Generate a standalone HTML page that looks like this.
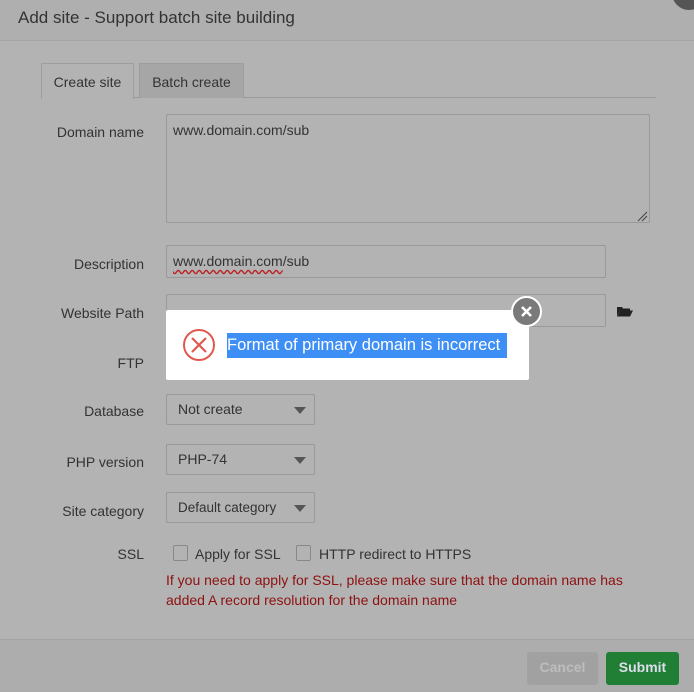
<!DOCTYPE html>
<html><head><meta charset="utf-8"><style>
*{box-sizing:border-box;margin:0;padding:0}
body{width:694px;height:692px;overflow:hidden;background:#b3b3b3;font-family:"Liberation Sans",sans-serif;color:#2a2a2a;position:relative}
.a{position:absolute}
.hdr{left:0;top:0;width:694px;height:41px;background:#afafaf;border-bottom:1px solid #a6a6a6}
.ttl{left:18px;top:8px;font-size:17px;color:#333}
.lbl{font-size:14px;color:#333;text-align:right;width:144px;left:0}
.inp{border:1px solid #999;border-radius:2px;font-size:14px;color:#333;padding-left:6px}
.sel{border:1px solid #999;border-radius:2px;font-size:14px;color:#333;padding-left:11px;line-height:29px;height:31px;width:149px;left:166px}
.sel:after{content:"";position:absolute;right:8px;top:12px;border-left:6px solid transparent;border-right:6px solid transparent;border-top:7px solid #555}
.cb{width:15px;height:16px;border:1px solid #888;border-radius:2px;top:545px}
.tab{font-size:14px;height:35px;line-height:36px;text-align:center;border:1px solid #9e9e9e;border-bottom:none}
</style></head><body>
<div class="a hdr"></div>
<div class="a ttl">Add site - Support batch site building</div>
<div class="a" style="left:672px;top:-24px;width:34px;height:34px;border-radius:50%;background:#555"></div>
<div class="a" style="left:41px;top:97px;width:615px;border-top:1px solid #999"></div>
<div class="a tab" style="left:41px;top:63px;width:93px;background:#b3b3b3;height:36px;color:#333">Create site</div>
<div class="a tab" style="left:139px;top:63px;width:105px;background:#a6a6a6;color:#333">Batch create</div>

<div class="a lbl" style="top:124px">Domain name</div>
<div class="a inp" style="left:166px;top:114px;width:484px;height:109px;padding-top:7px">www.domain.com/sub</div>
<svg class="a" style="left:636px;top:210px" width="12" height="12"><path d="M2 11L11 2M6 11L11 6" stroke="#444" stroke-width="1"/></svg>

<div class="a lbl" style="top:256px">Description</div>
<div class="a inp" style="left:166px;top:245px;width:440px;height:33px;line-height:31px"><span style="text-decoration:underline wavy #b22;text-underline-offset:3px">www.domain.com</span>/sub</div>

<div class="a lbl" style="top:305px">Website Path</div>
<div class="a inp" style="left:166px;top:294px;width:440px;height:33px"></div>
<svg class="a" style="left:616px;top:304px" width="18" height="14"><path d="M1 3h5l1 1.5h7v2H4L1 12z" fill="#222"/><path d="M4 6.5h13l-3 6H1z" fill="#222"/></svg>

<div class="a lbl" style="top:355px">FTP</div>

<div class="a lbl" style="top:403px">Database</div>
<div class="a sel" style="top:394px">Not create</div>
<div class="a lbl" style="top:454px">PHP version</div>
<div class="a sel" style="top:444px">PHP-74</div>
<div class="a lbl" style="top:503px">Site category</div>
<div class="a sel" style="top:492px;padding-left:11px;font-size:13.5px;white-space:nowrap">Default category</div>

<div class="a lbl" style="top:546px">SSL</div>
<div class="a cb" style="left:173px"></div>
<div class="a" style="left:195px;top:546px;font-size:14px;color:#333">Apply for SSL</div>
<div class="a cb" style="left:296px"></div>
<div class="a" style="left:319px;top:546px;font-size:14px;color:#333">HTTP redirect to HTTPS</div>
<div class="a" style="left:166px;top:570px;font-size:14px;color:#8e1010;line-height:20px;width:470px">If you need to apply for SSL, please make sure that the domain name has added A record resolution for the domain name</div>

<div class="a" style="left:0;top:639px;width:694px;height:53px;background:#acadac;border-top:1px solid #a3a3a3"></div>
<div class="a" style="left:527px;top:652px;width:71px;height:33px;background:#a1a1a1;border-radius:3px;color:#bdbdbd;font-size:14px;font-weight:bold;text-align:center;line-height:31px">Cancel</div>
<div class="a" style="left:606px;top:652px;width:73px;height:33px;background:#217f35;border-radius:3px;color:#dde;font-size:14px;font-weight:bold;text-align:center;line-height:31px">Submit</div>

<div class="a" style="left:166px;top:310px;width:363px;height:70px;background:#fff;border-radius:2px"></div>
<svg class="a" style="left:181px;top:327px" width="36" height="36"><circle cx="18" cy="18" r="15" fill="none" stroke="#e0594f" stroke-width="2"/><path d="M11 11L25 25M25 11L11 25" stroke="#e0594f" stroke-width="2.2"/></svg>
<div class="a" style="left:227px;top:333px;height:25px;width:280px;background:#3e8ff5;color:#fff;font-size:16.5px;line-height:25px;white-space:nowrap;overflow:hidden">Format of primary domain is incorrect</div>
<div class="a" style="left:511px;top:296px;width:31px;height:31px;border-radius:50%;background:#7a7a7a;border:2px solid #fff"></div>
<svg class="a" style="left:511px;top:296px" width="31" height="31"><path d="M11 11L20 20M20 11L11 20" stroke="#fff" stroke-width="2.6"/></svg>
</body></html>
